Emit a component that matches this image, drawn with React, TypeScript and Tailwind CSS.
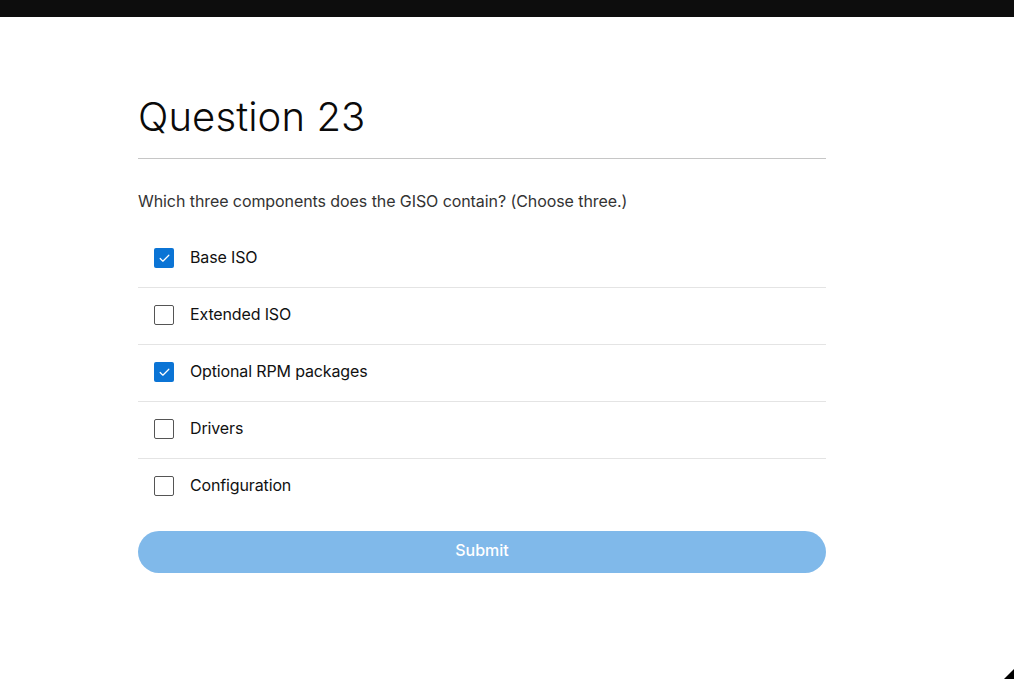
import { Check } from 'lucide-react'

const options = [
  { id: 1, label: 'Base ISO', checked: true },
  { id: 2, label: 'Extended ISO', checked: false },
  { id: 3, label: 'Optional RPM packages', checked: true },
  { id: 4, label: 'Drivers', checked: false },
  { id: 5, label: 'Configuration', checked: false },
]

export default function App() {
  return (
    <div className="relative h-[679px] overflow-hidden bg-white font-['Inter','Liberation_Sans',sans-serif]">
      <div className="h-[17px] bg-[#0d0d0d]" />

      <div className="ml-[138px] w-[688px] pt-[76px]">
        <h1 className="text-[40px] font-light leading-[48px] tracking-[0.1px] text-[#0a0a0a]">Question 23</h1>
        <div className="mt-[17px] h-px bg-[#c6c6c6]" />

        <p className="mt-[30px] text-[16px] leading-6 tracking-[-0.08px] text-[#333]">
          Which three components does the GISO contain? (Choose three.)
        </p>

        <div className="mt-[18px]">
          {options.map((opt, i) => (
            <div
              key={opt.id}
              className={`flex h-[57px] items-center gap-4 border-b pb-[4px] pl-4 ${i < options.length - 1 ? 'border-[#e4e4e4]' : 'border-transparent'}`}
            >
              {opt.checked ? (
                <span className="mt-[2px] flex h-5 w-5 items-center justify-center rounded-[2px] bg-[#0b74d5]">
                  <Check className="h-[13px] w-[13px] text-white" strokeWidth={2.25} />
                </span>
              ) : (
                <span className="mt-[2px] h-5 w-5 rounded-[2px] border border-[#555] bg-white" />
              )}
              <span className="text-[16px] tracking-[-0.14px] text-[#111]">{opt.label}</span>
            </div>
          ))}
        </div>

        <button className="mt-[15px] flex h-[42px] w-full items-center justify-center rounded-full bg-[#80b9ea] pb-1 text-[16px] font-medium text-white">
          Submit
        </button>
      </div>

      <svg className="absolute bottom-0 right-0" width="10" height="10" viewBox="0 0 10 10">
        <polygon points="10,0 10,10 0,10" fill="#000" />
      </svg>
    </div>
  )
}
